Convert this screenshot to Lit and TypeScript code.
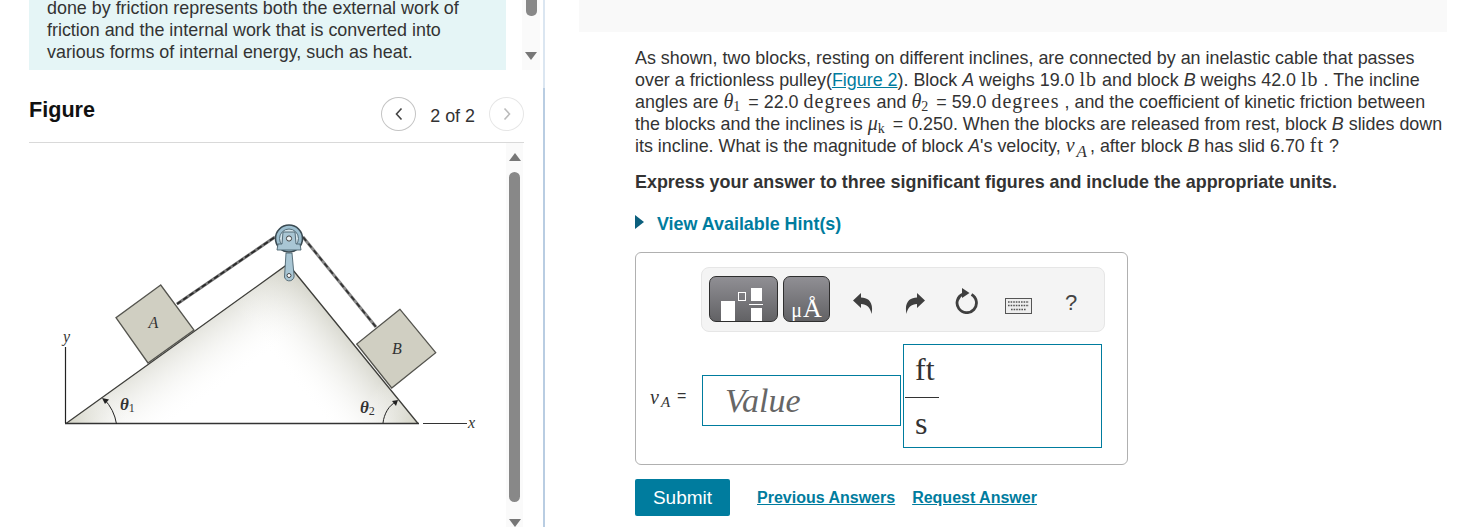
import { LitElement, html, css, svg } from "lit";
import { customElement } from "lit/decorators.js";

const figure = svg`
  <defs>
    <linearGradient id="gl" gradientUnits="userSpaceOnUse" x1="176" y1="345" x2="212" y2="395">
      <stop offset="0" stop-color="#c4c4b6" stop-opacity=".45"/><stop offset="1" stop-color="#fff" stop-opacity="0"/>
    </linearGradient>
    <linearGradient id="gr" gradientUnits="userSpaceOnUse" x1="352" y1="345" x2="298" y2="389">
      <stop offset="0" stop-color="#c4c4b6" stop-opacity=".6"/><stop offset="1" stop-color="#fff" stop-opacity="0"/>
    </linearGradient>
    <radialGradient id="gc1" gradientUnits="userSpaceOnUse" cx="66" cy="424" r="66">
      <stop offset="0" stop-color="#d2d2c4"/><stop offset="1" stop-color="#fff" stop-opacity="0"/>
    </radialGradient>
    <radialGradient id="gc2" gradientUnits="userSpaceOnUse" cx="418" cy="424" r="56">
      <stop offset="0" stop-color="#d2d2c4"/><stop offset="1" stop-color="#fff" stop-opacity="0"/>
    </radialGradient>
  </defs>
  <polygon points="66,424 288,264 418,424" fill="#fff"/>
  <polygon points="66,424 288,264 418,424" fill="url(#gl)"/>
  <polygon points="66,424 288,264 418,424" fill="url(#gr)"/>
  <polygon points="66,424 288,264 418,424" fill="url(#gc1)"/>
  <polygon points="66,424 288,264 418,424" fill="url(#gc2)"/>
  <polyline points="66,423.5 288,264 418,423.5" fill="none" stroke="#3e3e3a" stroke-width="1.3"/>
  <line x1="65" y1="423.5" x2="419" y2="423.5" stroke="#333" stroke-width="1.3"/>
  <line x1="423" y1="423.5" x2="467" y2="423.5" stroke="#333" stroke-width="1.1"/>
  <line x1="65.5" y1="347" x2="65.5" y2="423" stroke="#222" stroke-width="1.2"/>

  <polygon points="160.7,285 116,317.7 148,363 194,330" fill="#d0cfc2" stroke="#55554f" stroke-width="1.3"/>
  <polygon points="400,309.3 356.7,344 391.7,388 435.7,352.7" fill="#d0cfc2" stroke="#55554f" stroke-width="1.3"/>

  <line x1="177" y1="304" x2="275" y2="237" stroke="#777" stroke-width="3"/>
  <line x1="177" y1="304" x2="275" y2="237" stroke="#2a2a2a" stroke-width="1.8" stroke-dasharray="5 2.5"/>
  <line x1="303" y1="237" x2="376" y2="327" stroke="#888" stroke-width="3"/>
  <line x1="303" y1="237" x2="376" y2="327" stroke="#333" stroke-width="1.8" stroke-dasharray="5 3.5"/>

  <circle cx="289" cy="238.5" r="13.5" fill="#9dbfd0" stroke="#3a4a52" stroke-width="1.6"/>
  <circle cx="289" cy="238.5" r="9.5" fill="#d3e3ea" stroke="#56707c" stroke-width="1"/>
  <path d="M283 232 h12 l1 12 h4 l1 6 h-24 l1 -6 h4 z" fill="#a9c6d4" stroke="#4b626e" stroke-width=".9"/>
  <circle cx="289" cy="238.5" r="2.6" fill="#eef4f6" stroke="#444" stroke-width="1"/>
  <path d="M286 253 h6 l2 22 a4.5 4.5 0 0 1 -9.5 2 z" fill="#a9c6d4" stroke="#4b626e" stroke-width=".9"/>
  <circle cx="289" cy="275.5" r="2" fill="#fff" stroke="#444" stroke-width="1"/>

  <path d="M116.5 424 A46 46 0 0 0 104 399" fill="none" stroke="#222" stroke-width="1"/>
  <polygon points="102,398 109,399.5 105,404" fill="#222"/>
  <path d="M383 423 C384 414 389 405 396 402" fill="none" stroke="#222" stroke-width="1"/>
  <polygon points="398,400 392,401 396,406" fill="#222"/>

  <text class="lab" x="148.500" y="328">A</text>
  <text class="lab" x="392" y="354">B</text>
  <text class="lab" x="63" y="342">y</text>
  <text class="lab" x="468" y="428">x</text>
  <text class="lab th" x="120" y="410">θ<tspan class="sb" dy="2">1</tspan></text>
  <text class="lab th" x="360" y="413">θ<tspan class="sb" dy="2">2</tspan></text>
`;

@customElement("app-root")
export class AppRoot extends LitElement {
  static styles = css`
    :host {
      display: flex;
      height: 527px;
      width: 1458px;
      overflow: hidden;
      background: #fff;
      color: #333;
      font: 17.9px/22px "Liberation Sans", Arial, sans-serif;
    }
    .left { flex: 0 0 543px; padding-left: 29px; box-sizing: border-box; }
    .sep {
      flex: 0 0 2px;
      background: linear-gradient(to bottom, #dbe6f1 88px, #b9cde2 88px);
    }
    .right { flex: 1; padding-left: 34px; min-width: 0; }

    .top { display: flex; height: 70px; }
    .note {
      width: 477px;
      height: 70px;
      box-sizing: border-box;
      background: #e5f5f6;
      padding: 0 18px;
      overflow: hidden;
    }
    .note p { margin: -3px 0 0; }
    .sb1 {
      margin-left: 16px;
      width: 18px;
      height: 70px;
      background: #fafafa;
      display: flex;
      flex-direction: column;
      align-items: center;
    }
    .thumb { width: 11px; background: #888; }
    .sb1 .thumb { height: 16px; border-radius: 0 0 5px 5px; }
    .down {
      width: 0; height: 0;
      border-left: 6.5px solid transparent;
      border-right: 6.5px solid transparent;
      border-top: 8px solid #777;
    }
    .up {
      width: 0; height: 0;
      border-left: 6.5px solid transparent;
      border-right: 6.5px solid transparent;
      border-bottom: 8px solid #777;
    }
    .sb1 .down { margin-top: 36px; }

    .fig-head {
      width: 495px;
      height: 73px;
      box-sizing: border-box;
      border-bottom: 1px solid #d9d9d9;
      display: flex;
      align-items: center;
    }
    .fig-head h2 { margin: 8px 0 0; font-size: 21.6px; font-weight: 700; color: #111; flex: 1; }
    .pager { display: flex; align-items: center; gap: 14px; color: #333; margin-top: 15px; }
    .pager .count { padding-top: 4px; }
    .circ {
      width: 35px; height: 34px;
      box-sizing: border-box;
      border: 1px solid #c4c4c4;
      border-radius: 50%;
      display: flex; align-items: center; justify-content: center;
      background: #fff;
    }
    .circ.off { border-color: #e6e6e6; }
    .fig-body { display: flex; height: 384px; }
    .fig-body svg { display: block; width: 477px; height: 384px; flex: none; }
    .lab { font: italic 16px "Liberation Serif", serif; fill: #333; }
    .th { font-size: 17px; font-weight: 700; }
    .sb { font-size: 12px; font-style: normal; font-weight: 400; }
    .sb2 {
      width: 17px;
      background: #fafafa;
      display: flex;
      flex-direction: column;
      align-items: center;
      padding-top: 10px;
      box-sizing: border-box;
    }
    .sb2 .thumb { width: 11px; height: 331px; margin: 11px 0 17px; border-radius: 6px; }

    .bar { width: 868px; height: 32px; background: #f9f9f9; }
    .content { padding-left: 56px; width: 812px; }
    .q { margin: 15px 0 0; }
    .s { font-family: "Liberation Serif", serif; font-size: 20px; line-height: 1; letter-spacing: 1px; }
    .mi { font-family: "Liberation Serif", serif; font-style: italic; font-size: 20px; line-height: 1; }
    .mi.g { margin-right: 3px; }
    .mi sub { font-size: 14px; line-height: 0; vertical-align: -3px; }
    .mi.v sub { font-size: 17px; margin-left: 2px; vertical-align: -5px; }
    .mi.v { margin-right: 3px; }
    .rm { font-style: normal; }
    a { color: #007c9e; }
    .ex { margin: 14px 0 0; font-weight: 700; }
    .hint {
      margin-top: 20px;
      display: flex;
      align-items: center;
      gap: 13px;
      font-weight: 700;
      color: #007c9e;
    }
    .tri {
      width: 0; height: 0; margin-top: -4px;
      border-top: 7px solid transparent;
      border-bottom: 7px solid transparent;
      border-left: 9px solid #0b5f7d;
    }
    .box {
      margin-top: 17px;
      width: 493px;
      height: 213px;
      box-sizing: border-box;
      border: 1px solid #b0b0b0;
      border-radius: 6px;
      padding: 14px 22px 0 14px;
    }
    .tools {
      margin-left: 51px;
      width: 404px;
      height: 65px;
      box-sizing: border-box;
      background: #f4f4f4;
      border: 1px solid #e6e6e6;
      border-radius: 8px;
      display: flex;
      align-items: center;
      padding: 0 0 0 7px;
    }
    .tbtn {
      height: 46px;
      margin-top: -1px;
      box-sizing: border-box;
      border: 1px solid #2e2e2e;
      border-radius: 7px;
      background: linear-gradient(#908f94, #626265);
      flex: none;
      overflow: hidden;
    }
    .tbtn.a { width: 69px; margin-right: 5px; }
    .tbtn.b {
      width: 47px;
      color: #fff;
      font: 26px/24px "Liberation Serif", serif;
      display: flex;
      align-items: flex-end;
      justify-content: center;
    }
    .tbtn.b .mu { font-size: 20px; margin-right: 1px; line-height: 22px; }
    .tbtn svg { display: block; }
    .ticon { flex: none; display: block; }
    .i1 { margin-left: 23px; margin-top: 8px; }
    .i2 { margin-left: 32px; margin-top: 8px; }
    .i3 { margin-left: 29px; margin-top: 2px; }
    .i4 { margin-left: 27px; margin-top: 12px; }
    .help { margin-left: 33px; font-size: 22px; color: #444; margin-top: 6px; }

    .ans { display: flex; align-items: flex-start; margin-top: 12px; }
    .lbl { width: 52px; padding-top: 43px; box-sizing: border-box; font-size: 16px; white-space: nowrap; }
    .lbl .mi { font-size: 20px; }
    .lbl .mi sub { font-size: 15px; margin-left: 2px; }
    .lbl .eq { margin-left: 7px; position: relative; top: -3px; }
    .val {
      width: 199px;
      height: 51px;
      box-sizing: border-box;
      border: 1px solid #007c9e;
      margin-top: 31px;
      font: italic 34px/50px "Liberation Serif", serif;
      color: #666;
      padding-left: 22px;
    }
    .unit {
      margin-left: 2px;
      width: 199px;
      height: 104px;
      box-sizing: border-box;
      border: 1px solid #007c9e;
      font: 32px/1 "Liberation Serif", serif;
      padding: 8px 0 0 1px;
      color: #333;
    }
    .frac { width: 34px; }
    .frac .n { height: 44px; border-bottom: 1px solid #333; padding-left: 10px; }
    .frac .d { padding: 9px 0 0 10px; }

    .actions { display: flex; align-items: center; margin-top: 14px; font-weight: 700; font-size: 16px; }
    .submit {
      width: 95px; height: 37px;
      background: #007c9e;
      color: #fff;
      border-radius: 2px;
      font-size: 19px;
      font-weight: 400;
      display: flex; align-items: center; justify-content: center;
      margin-right: 27px;
    }
    .actions a { margin-right: 17px; }
  `;

  render() {
    return html`
      <div class="left">
        <div class="top">
          <div class="note">
            <p>done by friction represents both the external work of friction and the internal work that is converted into various forms of internal energy, such as heat.</p>
          </div>
          <div class="sb1"><div class="thumb"></div><div class="down"></div></div>
        </div>
        <div class="fig-head">
          <h2>Figure</h2>
          <div class="pager">
            <div class="circ">
              <svg width="10" height="14" viewBox="0 0 10 14"><path d="M7.5 1.5 L2.5 7 L7.5 12.5" fill="none" stroke="#444" stroke-width="1.6"/></svg>
            </div>
            <span class="count">2 of 2</span>
            <div class="circ off">
              <svg width="10" height="14" viewBox="0 0 10 14"><path d="M2.5 1.5 L7.5 7 L2.5 12.5" fill="none" stroke="#bbb" stroke-width="1.6"/></svg>
            </div>
          </div>
        </div>
        <div class="fig-body">
          <svg viewBox="29 143 477 384">${figure}</svg>
          <div class="sb2"><div class="up"></div><div class="thumb"></div><div class="down"></div></div>
        </div>
      </div>
      <div class="sep"></div>
      <div class="right">
        <div class="bar"></div>
        <div class="content">
          <p class="q">As shown, two blocks, resting on different inclines, are connected by an inelastic cable that passes over a frictionless pulley(<a href="#">Figure 2</a>). Block <i>A</i> weighs 19.0 <span class="s">lb</span> and block <i>B</i> weighs 42.0 <span class="s">lb</span> . The incline angles are <span class="mi g">θ<sub class="rm">1</sub></span> = 22.0 <span class="s">degrees</span> and <span class="mi g">θ<sub class="rm">2</sub></span> = 59.0 <span class="s">degrees</span> , and the coefficient of kinetic friction between the blocks and the inclines is <span class="mi g">μ<sub class="rm">k</sub></span> = 0.250. When the blocks are released from rest, block <i>B</i> slides down its incline. What is the magnitude of block <i>A</i>'s velocity, <span class="mi v">v<sub>A</sub></span>, after block <i>B</i> has slid 6.70 <span class="s">ft</span> ?</p>
          <p class="ex">Express your answer to three significant figures and include the appropriate units.</p>
          <div class="hint"><span class="tri"></span><span>View Available Hint(s)</span></div>
          <div class="box">
            <div class="tools">
              <div class="tbtn a">
                <svg width="67" height="44" viewBox="0 0 67 44">
                  <rect x="11" y="24" width="14" height="20" fill="#fff"/>
                  <rect x="28.5" y="15.5" width="7" height="8" fill="none" stroke="#fff" stroke-width="1"/>
                  <rect x="41" y="11" width="11" height="13" fill="#fff"/>
                  <rect x="39" y="27" width="14" height="1" fill="#fff"/>
                  <rect x="41" y="31" width="11" height="13" fill="#fff"/>
                </svg>
              </div>
              <div class="tbtn b"><span class="mu">μ</span><span>Å</span></div>
              <svg class="ticon i1" width="20" height="21" viewBox="0 0 20 21"><path d="M0 7.5 L8 0 V4.5 C15 4.5 21 9 18.5 21 C17.5 14.5 13.5 11 8 11 V15 Z" fill="#3f3f3f"/></svg>
              <svg class="ticon i2" width="20" height="21" viewBox="0 0 20 21"><path d="M20 7.5 L12 0 V4.5 C5 4.5 -1 9 1.5 21 C2.5 14.5 6.5 11 12 11 V15 Z" fill="#3f3f3f"/></svg>
              <svg class="ticon i3" width="24" height="26" viewBox="0 0 24 26">
                <path d="M17.5 6.5 A9.7 9.7 0 1 1 9 6" fill="none" stroke="#3f3f3f" stroke-width="2.8"/>
                <polygon points="8,0 15.5,5 8,10" fill="#3f3f3f"/>
              </svg>
              <svg class="ticon i4" width="27" height="16" viewBox="0 0 27 16">
                <rect x=".5" y=".5" width="26" height="15" fill="#eee" stroke="#555"/>
                <path d="M3 4 H24 M3 7.500 H24 M6 11.5 H21" stroke="#555" stroke-width="1.6" stroke-dasharray="1.6 1"/>
              </svg>
              <span class="help">?</span>
            </div>
            <div class="ans">
              <div class="lbl"><span class="mi">v<sub>A</sub></span><span class="eq">=</span></div>
              <div class="val">Value</div>
              <div class="unit">
                <div class="frac"><div class="n">ft</div><div class="d">s</div></div>
              </div>
            </div>
          </div>
          <div class="actions">
            <div class="submit">Submit</div>
            <a href="#">Previous Answers</a>
            <a href="#">Request Answer</a>
          </div>
        </div>
      </div>
    `;
  }
}
